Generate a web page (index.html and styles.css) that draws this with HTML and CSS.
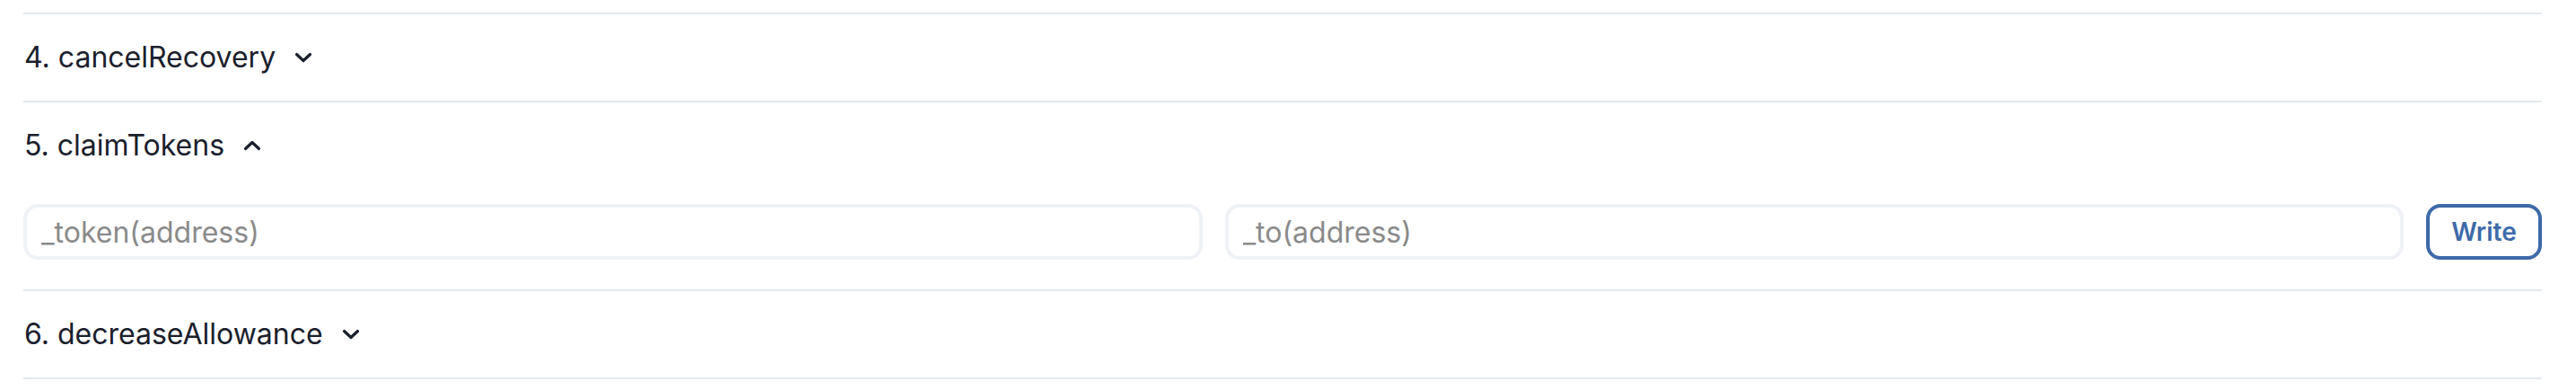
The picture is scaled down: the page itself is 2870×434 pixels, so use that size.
FILE: index.html
```html
<!DOCTYPE html>
<html lang="en">
<head>
<meta charset="utf-8">
<title>Write Contract</title>
<link rel="stylesheet" href="styles.css">
</head>
<body>
<div class="list">
  <div class="item">
    <div class="head">
      <span class="title">4. cancelRecovery</span>
      <svg class="chev" viewBox="0 0 20 12" width="20" height="12"><path d="M2.5 2.5 L10 9.5 L17.5 2.5" fill="none" stroke="#1a202c" stroke-width="3.2" stroke-linecap="round" stroke-linejoin="round"/></svg>
    </div>
  </div>
  <div class="item">
    <div class="head">
      <span class="title">5. claimTokens</span>
      <svg class="chev" viewBox="0 0 20 12" width="20" height="12"><path d="M2.5 9.5 L10 2.5 L17.5 9.5" fill="none" stroke="#1a202c" stroke-width="3.2" stroke-linecap="round" stroke-linejoin="round"/></svg>
    </div>
    <div class="body">
      <input class="field" type="text" placeholder="_token(address)">
      <input class="field" type="text" placeholder="_to(address)">
      <button class="write" type="button">Write</button>
    </div>
  </div>
  <div class="item last">
    <div class="head">
      <span class="title">6. decreaseAllowance</span>
      <svg class="chev" viewBox="0 0 20 12" width="20" height="12"><path d="M2.5 2.5 L10 9.5 L17.5 2.5" fill="none" stroke="#1a202c" stroke-width="3.2" stroke-linecap="round" stroke-linejoin="round"/></svg>
    </div>
  </div>
</div>
</body>
</html>
```
FILE: styles.css
```css
html, body {
  margin: 0;
  padding: 0;
  background: #ffffff;
}
body {
  font-family: Inter, "Noto Sans", sans-serif;
  color: #1a202c;
}
.list {
  margin: 14px 38px 0 26px;
}
.item {
  border-top: 2px solid #e2e8f0;
}
.item.last {
  border-bottom: 2px solid #e2e8f0;
}
.head {
  height: 96px;
  display: flex;
  align-items: center;
  padding-left: 1px;
}
.title {
  font-size: 32px;
  line-height: 40px;
  font-weight: 400;
}
.chev {
  margin-left: 21px;
  display: block;
}
.body {
  display: flex;
  gap: 25px;
  padding: 17px 0 33px 0;
}
.field {
  flex: 1;
  min-width: 0;
  height: 62px;
  box-sizing: border-box;
  border: 4px solid #eef1f6;
  border-radius: 16px;
  padding: 0 16px;
  font-family: Inter, "Noto Sans", sans-serif;
  font-size: 32px;
  color: #1a202c;
  background: #fff;
  outline: none;
}
.field::placeholder {
  color: #8a8a8a;
}
.write {
  width: 129px;
  height: 62px;
  box-sizing: border-box;
  border: 4px solid #3d6aa9;
  border-radius: 16px;
  background: #fff;
  color: #3d6aa9;
  font-family: Inter, "Noto Sans", sans-serif;
  font-size: 28px;
  font-weight: 600;
  padding: 0;
}
```
